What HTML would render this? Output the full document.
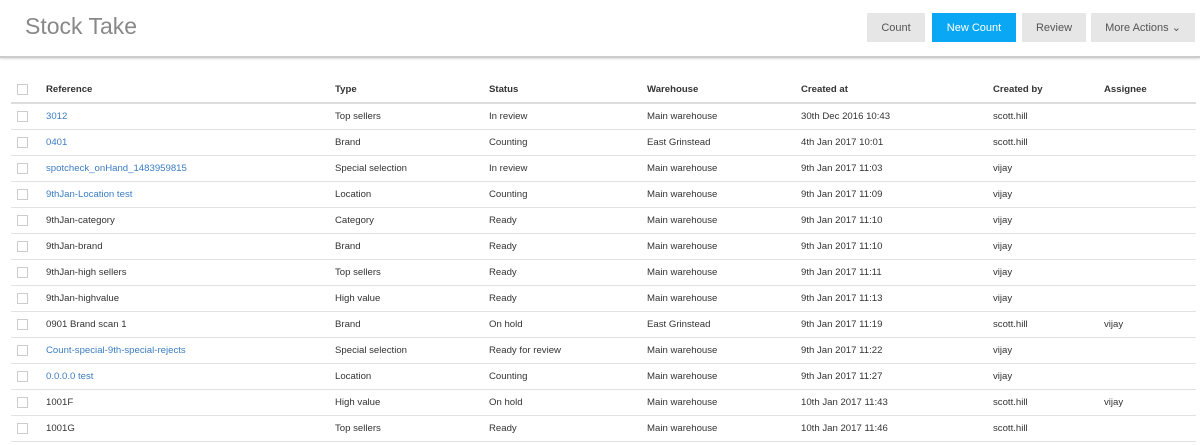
<!DOCTYPE html>
<html><head><style>
body{margin:0;width:1200px;height:445px;overflow:hidden;background:#fff;font-family:"Liberation Sans",sans-serif;font-size:9.6px;color:#333}
.hdr{position:absolute;left:0;top:0;width:1200px;height:56px;background:#fff;border-bottom:2px solid #ccc;box-shadow:0 1px 2px rgba(0,0,0,.15)}
h1{position:absolute;left:25px;top:13px;margin:0;font-weight:normal;font-size:23px;color:#888}
.b{position:absolute;top:13px;height:29px;line-height:31px;text-align:center;background:#e6e6e6;color:#555;font-size:11px}
.b.p{background:#0aa7f5;color:#fff}
table{position:absolute;left:11px;top:76px;width:1185px;border-collapse:collapse}
td,th{height:25px;border-bottom:1px solid #e2e2e2;text-align:left;padding:0;white-space:nowrap}
th{font-weight:bold;border-bottom:2px solid #ddd;height:26px}
.cb{width:35px}
.cb span{display:block;width:9px;height:9px;border:1px solid #ccc;margin-left:6px}
a{color:#3b7dc4;text-decoration:none}
</style></head><body>
<div class="hdr"><h1>Stock Take</h1>
<div class="b" style="left:867px;width:58px">Count</div>
<div class="b p" style="left:932px;width:84px">New Count</div>
<div class="b" style="left:1022px;width:64px">Review</div>
<div class="b" style="left:1091px;width:104px">More Actions &#8964;</div>
</div>
<table>
<colgroup><col style="width:35px"><col style="width:289px"><col style="width:154px"><col style="width:158px"><col style="width:154px"><col style="width:192px"><col style="width:111px"><col></colgroup>
<tr><th class="cb"><span></span></th><th>Reference</th><th>Type</th><th>Status</th><th>Warehouse</th><th>Created at</th><th>Created by</th><th>Assignee</th></tr>
<tr><td class="cb"><span></span></td><td><a>3012</a></td><td>Top sellers</td><td>In review</td><td>Main warehouse</td><td>30th Dec 2016 10:43</td><td>scott.hill</td><td></td></tr>
<tr><td class="cb"><span></span></td><td><a>0401</a></td><td>Brand</td><td>Counting</td><td>East Grinstead</td><td>4th Jan 2017 10:01</td><td>scott.hill</td><td></td></tr>
<tr><td class="cb"><span></span></td><td><a>spotcheck_onHand_1483959815</a></td><td>Special selection</td><td>In review</td><td>Main warehouse</td><td>9th Jan 2017 11:03</td><td>vijay</td><td></td></tr>
<tr><td class="cb"><span></span></td><td><a>9thJan-Location test</a></td><td>Location</td><td>Counting</td><td>Main warehouse</td><td>9th Jan 2017 11:09</td><td>vijay</td><td></td></tr>
<tr><td class="cb"><span></span></td><td>9thJan-category</td><td>Category</td><td>Ready</td><td>Main warehouse</td><td>9th Jan 2017 11:10</td><td>vijay</td><td></td></tr>
<tr><td class="cb"><span></span></td><td>9thJan-brand</td><td>Brand</td><td>Ready</td><td>Main warehouse</td><td>9th Jan 2017 11:10</td><td>vijay</td><td></td></tr>
<tr><td class="cb"><span></span></td><td>9thJan-high sellers</td><td>Top sellers</td><td>Ready</td><td>Main warehouse</td><td>9th Jan 2017 11:11</td><td>vijay</td><td></td></tr>
<tr><td class="cb"><span></span></td><td>9thJan-highvalue</td><td>High value</td><td>Ready</td><td>Main warehouse</td><td>9th Jan 2017 11:13</td><td>vijay</td><td></td></tr>
<tr><td class="cb"><span></span></td><td>0901 Brand scan 1</td><td>Brand</td><td>On hold</td><td>East Grinstead</td><td>9th Jan 2017 11:19</td><td>scott.hill</td><td>vijay</td></tr>
<tr><td class="cb"><span></span></td><td><a>Count-special-9th-special-rejects</a></td><td>Special selection</td><td>Ready for review</td><td>Main warehouse</td><td>9th Jan 2017 11:22</td><td>vijay</td><td></td></tr>
<tr><td class="cb"><span></span></td><td><a>0.0.0.0 test</a></td><td>Location</td><td>Counting</td><td>Main warehouse</td><td>9th Jan 2017 11:27</td><td>vijay</td><td></td></tr>
<tr><td class="cb"><span></span></td><td>1001F</td><td>High value</td><td>On hold</td><td>Main warehouse</td><td>10th Jan 2017 11:43</td><td>scott.hill</td><td>vijay</td></tr>
<tr><td class="cb"><span></span></td><td>1001G</td><td>Top sellers</td><td>Ready</td><td>Main warehouse</td><td>10th Jan 2017 11:46</td><td>scott.hill</td><td></td></tr>
</table>
</body></html>
